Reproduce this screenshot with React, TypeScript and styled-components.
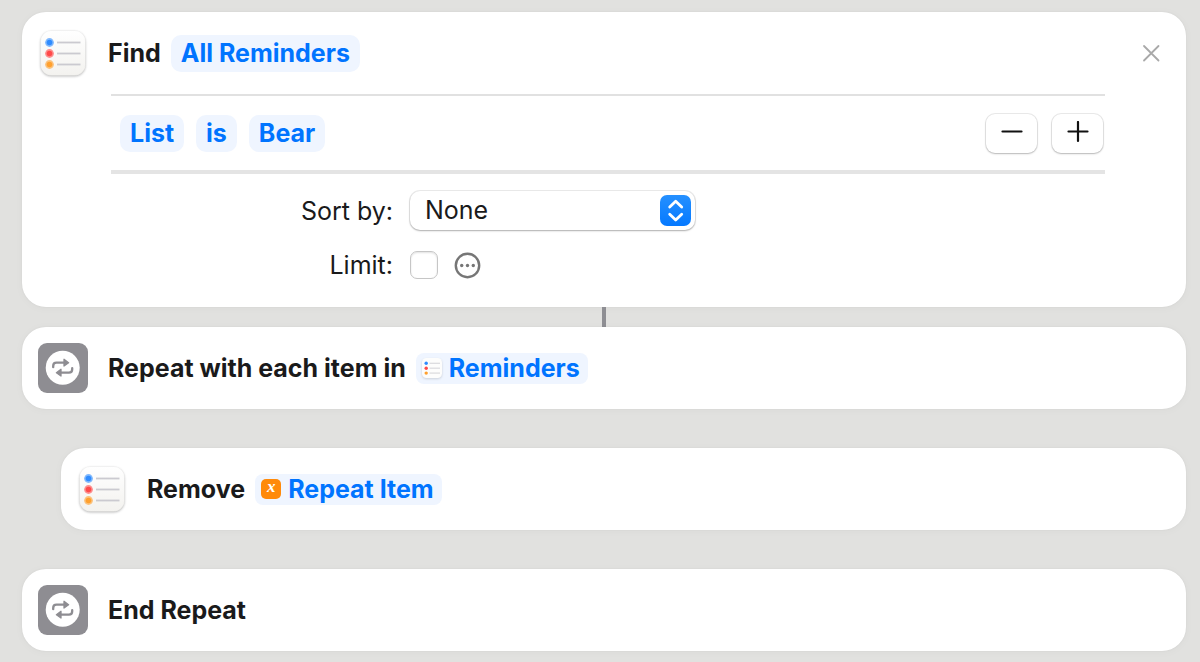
import React from "react";
import styled, { createGlobalStyle, css } from "styled-components";

const GlobalStyle = createGlobalStyle`
  *, *::before, *::after { box-sizing: border-box; }
  body {
    margin: 0;
    background: #e1e1df;
    color: #1a1a1b;
    font: 400 25px/30px Inter, "Liberation Sans", sans-serif;
  }
  button, select, input { font: inherit; color: inherit; margin: 0; }
`;

const Workflow = styled.main`
  display: flex;
  flex-direction: column;
  padding: 12px 14px 11px 22px;
`;

const Card = styled.section<{ $nested?: boolean }>`
  background: #fff;
  border-radius: 24px;
  margin-left: ${(p) => (p.$nested ? 39 : 0)}px;
  box-shadow: 0 0 2px rgba(0, 0, 0, 0.06), 0 1px 10px rgba(0, 0, 0, 0.03);
`;

const Connector = styled.div`
  align-self: center;
  width: 4px;
  height: 20px;
  background: #8e8e93;
`;

const Gap = styled.div`
  height: 39px;
`;

const ActionRow = styled.div`
  display: flex;
  align-items: center;
  height: 82px;
  padding: 0 24px 0 16px;
`;

const IconSlot = styled.div`
  display: flex;
  flex: none;
  width: 70px;
`;

const Title = styled.h2`
  margin: 0;
  font-size: 25px;
  line-height: 30px;
  font-weight: 650;
  white-space: nowrap;
`;

const Chip = styled.button<{ $compact?: boolean }>`
  display: inline-flex;
  align-items: center;
  gap: 7px;
  border: 0;
  border-radius: 10px;
  background: #eff5ff;
  color: #0074ff;
  font-weight: 650;
  white-space: nowrap;
  height: 37px;
  padding: 0 10px;
  ${(p) =>
    p.$compact &&
    css`
      height: 31px;
      padding: 0 8px 0 6px;
      border-radius: 8px;
    `}
`;

const TitleChip = styled(Chip)`
  margin-left: 10px;
`;

const CloseButton = styled.button`
  display: flex;
  margin-left: auto;
  padding: 0;
  border: 0;
  background: none;
  color: #a9a9a9;
`;

const FilterRow = styled.div`
  display: flex;
  align-items: center;
  gap: 12px;
  margin: 0 81px 0 89px;
  height: 80px;
  padding: 0 2px 0 9px;
  border-top: 2px solid #e1e1e1;
  border-bottom: 4px solid #e4e4e4;
`;

const Stepper = styled.div`
  display: flex;
  gap: 15px;
  margin-left: auto;
`;

const StepButton = styled.button`
  display: flex;
  align-items: center;
  justify-content: center;
  width: 51px;
  height: 39px;
  padding: 0 0 2px;
  border: 0;
  border-radius: 9px;
  background: #fff;
  color: #111;
  box-shadow: 0 0 0 1px rgba(0, 0, 0, 0.08), 0 1px 2px rgba(0, 0, 0, 0.22);
`;

const Options = styled.div`
  display: grid;
  grid-template-columns: 371px 1fr;
  column-gap: 17px;
  row-gap: 20px;
  align-items: center;
  padding: 17px 24px 27px 0;
`;

const Label = styled.label`
  text-align: right;
`;

const SelectBox = styled.div`
  position: relative;
  width: 285px;
`;

const Select = styled.select`
  display: block;
  appearance: none;
  width: 100%;
  height: 39px;
  padding: 0 44px 2px 15px;
  border: 0;
  border-radius: 10px;
  background: #fff;
  box-shadow: 0 0 0 1px rgba(0, 0, 0, 0.08), 0 1px 2px rgba(0, 0, 0, 0.26);
`;

const SelectArrows = styled.svg`
  position: absolute;
  right: 4px;
  top: 4px;
  pointer-events: none;
`;

const LimitControls = styled.div`
  display: flex;
  align-items: center;
  gap: 16px;
`;

const Checkbox = styled.input`
  appearance: none;
  width: 28px;
  height: 28px;
  border: 1px solid #c6c6c6;
  border-radius: 7px;
  background: #fff;
  box-shadow: inset 0 1px 2px rgba(0, 0, 0, 0.12);
`;

const MoreButton = styled.button`
  display: flex;
  padding: 0;
  border: 0;
  background: none;
`;

const RemindersTile = styled.svg`
  display: block;
  margin-left: 2px;
  overflow: visible;
  filter: drop-shadow(0 1px 1px rgba(0, 0, 0, 0.25));
`;

const SmallTile = styled.svg`
  display: block;
  overflow: visible;
  filter: drop-shadow(0 1px 1px rgba(0, 0, 0, 0.15));
`;

const VariableBadge = styled.span`
  display: flex;
  align-items: center;
  justify-content: center;
  width: 20px;
  height: 20px;
  border-radius: 5px;
  background: #ff8a0a;
  color: #fff;
  font: italic 700 17px/16px "Liberation Serif", serif;
  padding-bottom: 4px;
`;

const dots = [
  { y: 12.5, color: "#2f8cff" },
  { y: 23.5, color: "#ff4a4a" },
  { y: 34.5, color: "#ffa02e" },
];

function RemindersIcon() {
  return (
    <RemindersTile width="46" height="46" viewBox="0 0 46 46" aria-hidden="true">
      <defs>
        <linearGradient id="tile" x1="0" y1="0" x2="0" y2="1">
          <stop offset="0" stopColor="#fff" />
          <stop offset="1" stopColor="#f3f2ef" />
        </linearGradient>
      </defs>
      <rect x="0.500" y="0.500" width="45" height="45" rx="11" fill="url(#tile)" stroke="#000" strokeOpacity="0.03" />
      {dots.map((d) => (
        <g key={d.y}>
          <circle cx="9.5" cy={d.y} r="4.4" fill={d.color} fillOpacity="0.6" />
          <circle cx="9.5" cy={d.y} r="2.8" fill={d.color} />
          <path d={`M17 ${d.y}H40.500`} stroke="#cbcad0" strokeWidth="1.8" />
        </g>
      ))}
    </RemindersTile>
  );
}

function SmallRemindersIcon() {
  return (
    <SmallTile width="20" height="20" viewBox="0 0 20 20" aria-hidden="true">
      <rect width="20" height="20" rx="4.500" fill="#fdfdfc" />
      {dots.map((d, i) => (
        <g key={d.y}>
          <circle cx="4.200" cy={5.3 + i * 4.9} r="1.7" fill={d.color} />
          <path d={`M7.500 ${5.3 + i * 4.9}H18`} stroke="#dcdcdf" strokeWidth="1.3" />
        </g>
      ))}
    </SmallTile>
  );
}

function RepeatIcon() {
  return (
    <svg width="50" height="50" viewBox="0 0 50 50" aria-hidden="true">
      <rect width="50" height="50" rx="9" fill="#8e8d92" />
      <circle cx="24.700" cy="24.700" r="17" fill="#fff" />
      <g fill="none" stroke="#8e8d92" strokeWidth="2.300" strokeLinecap="round">
        <path d="M15.200 24.200V23Q15.200 19.700 18.500 19.700H26.500" />
        <path d="M34.200 25.200V26.300Q34.200 29.700 30.900 29.700H22.500" />
      </g>
      <g fill="#8e8d92" stroke="#8e8d92" strokeWidth="1.300" strokeLinejoin="round">
        <path d="M26 16.300V23.100L30.600 19.700Z" />
        <path d="M23 26.300V33.100L18.400 29.700Z" />
      </g>
    </svg>
  );
}

export default function App() {
  return (
    <>
      <GlobalStyle />
      <Workflow>
        <Card>
          <ActionRow>
            <IconSlot>
              <RemindersIcon />
            </IconSlot>
            <Title>Find</Title>
            <TitleChip type="button">All Reminders</TitleChip>
            <CloseButton type="button" aria-label="Remove action">
              <svg width="22" height="22" viewBox="0 0 22 22" fill="none" stroke="currentColor" strokeWidth="1.800" strokeLinecap="round">
                <path d="M4 4L18.500 18.500M18.500 4L4 18.500" />
              </svg>
            </CloseButton>
          </ActionRow>
          <FilterRow>
            <Chip type="button">List</Chip>
            <Chip type="button">is</Chip>
            <Chip type="button">Bear</Chip>
            <Stepper>
              <StepButton type="button" aria-label="Remove filter">
                <svg width="22" height="22" viewBox="0 0 22 22" fill="none" stroke="currentColor" strokeWidth="2.200" strokeLinecap="round">
                  <path d="M1.500 10.500H20.500" />
                </svg>
              </StepButton>
              <StepButton type="button" aria-label="Add filter">
                <svg width="22" height="22" viewBox="0 0 22 22" fill="none" stroke="currentColor" strokeWidth="2.200" strokeLinecap="round">
                  <path d="M1.500 10.500H20.500M11 1V20" />
                </svg>
              </StepButton>
            </Stepper>
          </FilterRow>
          <Options>
            <Label htmlFor="sort">Sort by:</Label>
            <SelectBox>
              <Select id="sort" defaultValue="None">
                <option>None</option>
              </Select>
              <SelectArrows width="31" height="31" viewBox="0 0 31 31" aria-hidden="true">
                <defs>
                  <linearGradient id="accent" x1="0" y1="0" x2="0" y2="1">
                    <stop offset="0" stopColor="#2590ff" />
                    <stop offset="1" stopColor="#0579ff" />
                  </linearGradient>
                </defs>
                <rect width="31" height="31" rx="7" fill="url(#accent)" />
                <path
                  d="M9.700 12L15.700 6.200L21.700 12M9.700 19.200L15.700 25L21.700 19.200"
                  fill="none"
                  stroke="#fff"
                  strokeWidth="2.800"
                  strokeLinecap="round"
                  strokeLinejoin="round"
                />
              </SelectArrows>
            </SelectBox>
            <Label htmlFor="limit">Limit:</Label>
            <LimitControls>
              <Checkbox id="limit" type="checkbox" />
              <MoreButton type="button" aria-label="More options">
                <svg width="28" height="28" viewBox="0 0 28 28" fill="#767676">
                  <circle cx="13.500" cy="14.500" r="11.700" fill="none" stroke="#767676" strokeWidth="2.400" />
                  <circle cx="7.700" cy="14.500" r="1.700" />
                  <circle cx="13.500" cy="14.500" r="1.700" />
                  <circle cx="19.300" cy="14.500" r="1.700" />
                </svg>
              </MoreButton>
            </LimitControls>
          </Options>
        </Card>
        <Connector />
        <Card>
          <ActionRow>
            <IconSlot>
              <RepeatIcon />
            </IconSlot>
            <Title>Repeat with each item in</Title>
            <TitleChip type="button" $compact>
              <SmallRemindersIcon />
              Reminders
            </TitleChip>
          </ActionRow>
        </Card>
        <Gap />
        <Card $nested>
          <ActionRow>
            <IconSlot>
              <RemindersIcon />
            </IconSlot>
            <Title>Remove</Title>
            <TitleChip type="button" $compact>
              <VariableBadge>x</VariableBadge>
              Repeat Item
            </TitleChip>
          </ActionRow>
        </Card>
        <Gap />
        <Card>
          <ActionRow>
            <IconSlot>
              <RepeatIcon />
            </IconSlot>
            <Title>End Repeat</Title>
          </ActionRow>
        </Card>
      </Workflow>
    </>
  );
}
